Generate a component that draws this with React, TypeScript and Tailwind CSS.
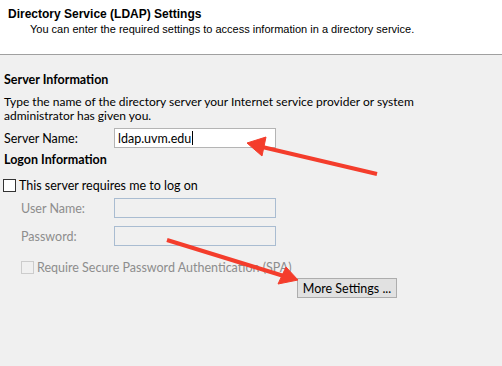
import type { ReactNode } from "react";

const font = { fontFamily: 'Lato, "Noto Sans", sans-serif' };
const headFont = { fontFamily: '"Liberation Sans", Arial, sans-serif', fontSize: "11px" };

function Field({ label, value, disabled }: { label: string; value?: string; disabled?: boolean }) {
  return (
    <div className="flex h-[20px] items-center">
      <span className={`w-[110px] ${disabled ? "pl-[17px] text-[#8d8d8d]" : "text-black"}`}>{label}</span>
      <div
        className={`flex h-[20px] w-[162px] items-center px-[3px] ${
          disabled ? "border border-[#a9bcd1] bg-[#f0f0f0]" : "border border-[#b4b4b4] bg-white"
        }`}
      >
        {value && (
          <>
            <span className="text-black">{value}</span>
            <span className="ml-[1px] h-[14px] w-[1px] bg-black" />
          </>
        )}
      </div>
    </div>
  );
}

function Box({ disabled, children }: { disabled?: boolean; children: ReactNode }) {
  return (
    <div className="flex items-center gap-[3px]">
      <span
        className={`h-[13px] w-[13px] border ${disabled ? "border-[#cccccc] bg-[#f0f0f0]" : "border-[#333333] bg-white"}`}
      />
      <span className={disabled ? "text-[#8d8d8d]" : "text-black"}>{children}</span>
    </div>
  );
}

export default function App() {
  return (
    <div className="relative h-[366px] w-[502px] overflow-hidden bg-[#f0f0f0] text-[12.5px] leading-[13px]" style={font}>
      <header className="h-[55px] border-b border-[#a0a0a0] bg-white pl-[8px] pt-[8px]">
        <h1 className="text-[12px] font-bold text-black" style={{ fontFamily: headFont.fontFamily }}>
          Directory Service (LDAP) Settings
        </h1>
        <p className="mt-[2px] pl-[22px] text-black" style={headFont}>
          You can enter the required settings to access information in a directory service.
        </p>
      </header>

      <main className="pl-[4px] pt-[18px]">
        <h2 className="font-bold">Server Information</h2>
        <p className="mt-[9px] whitespace-nowrap text-[12px] leading-[14px]">
          Type the name of the directory server your Internet service provider or system
          <br />
          administrator has given you.
        </p>
        <div className="mt-[5px]">
          <Field label="Server Name:" value="ldap.uvm.edu" />
        </div>
        <h2 className="mt-[5px] font-bold">Logon Information</h2>
        <div className="mt-[13px] -ml-[1px]">
          <Box>This server requires me to log on</Box>
        </div>
        <div className="mt-[6px] flex flex-col gap-[8px]">
          <Field label="User Name:" disabled />
          <Field label="Password:" disabled />
        </div>
        <div className="mt-[15px] pl-[17px]">
          <Box disabled>Require Secure Password Authentication (SPA)</Box>
        </div>
        <div className="mt-[4px] pl-[293px]">
          <button className="h-[20px] w-[100px] border border-[#adadad] bg-[#e1e1e1] text-black">More Settings ...</button>
        </div>
      </main>

      <svg className="pointer-events-none absolute left-0 top-0" width="502" height="366">
        <g fill="#f43d2c" stroke="#f43d2c">
          <line x1="377" y1="174" x2="258" y2="146" strokeWidth="4" />
          <polygon points="247,143 266,137 262,156" strokeWidth="1" />
          <line x1="167" y1="240" x2="287" y2="277" strokeWidth="4" />
          <polygon points="298,280 286,267 278,284" strokeWidth="1" />
        </g>
      </svg>
    </div>
  );
}
